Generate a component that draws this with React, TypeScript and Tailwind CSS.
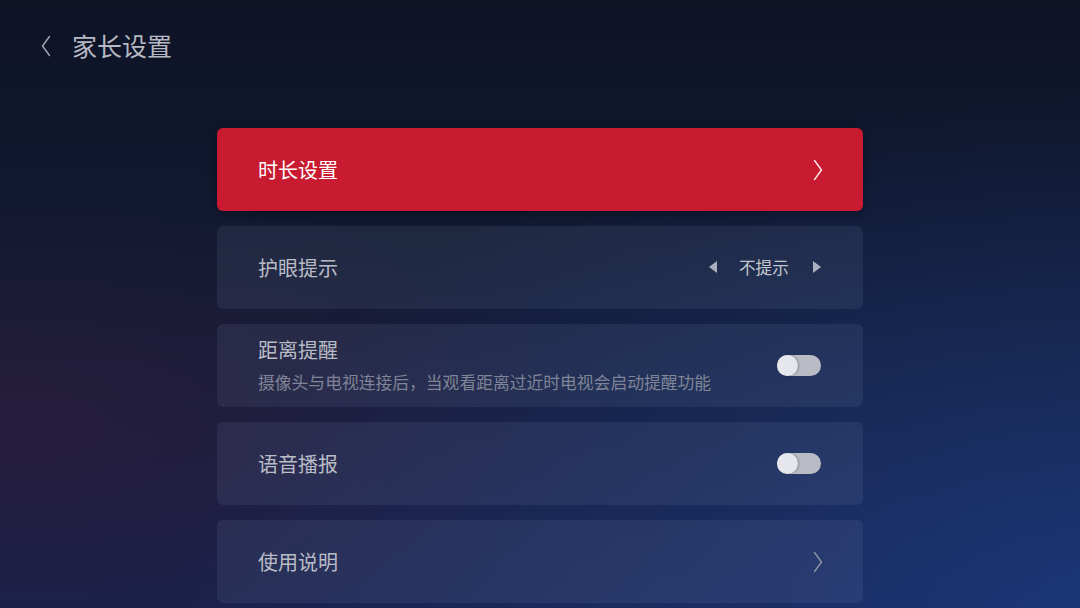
const font = "font-['Noto_Sans_CJK_SC','Noto_Sans',sans-serif]";

function Chevron({ dir = "right", className }: { dir?: "left" | "right"; className?: string }) {
    return (
        <svg viewBox="0 0 10 22" className={className} fill="none" stroke="currentColor" strokeWidth={1.4} strokeLinecap="round" strokeLinejoin="round">
            {dir === "right" ? <path d="M1.5 1.5 L8.5 11 L1.5 20.5" /> : <path d="M8.5 1.5 L1.5 11 L8.5 20.5" />}
        </svg>
    );
}

function Toggle() {
    return (
        <div className="relative w-[44px] h-[21px] rounded-full bg-[#b9bbc5]">
            <div className="absolute left-0 top-0 size-[21px] rounded-full bg-[#e6e7ec] shadow-[1px_0_2px_rgba(0,0,0,0.25)]"></div>
        </div>
    );
}

function Row({ children, active = false }: { children: React.ReactNode; active?: boolean }) {
    return (
        <div
            className={
                "h-[83px] rounded-[6px] pl-[41px] pr-[42px] flex items-center justify-between " +
                (active
                    ? "bg-[#c81a30] text-white shadow-[0_3px_10px_rgba(0,0,0,0.3)]"
                    : "bg-[rgba(150,165,200,0.11)] text-[#b9bcc6]")
            }
        >
            {children}
        </div>
    );
}

export default function App() {
    return (
        <div
            className={
                font +
                " w-[1080px] h-[608px] overflow-hidden bg-[radial-gradient(ellipse_at_0%_70%,rgba(80,28,60,0.3),transparent_40%),radial-gradient(ellipse_at_105%_100%,rgba(30,70,150,0.6),transparent_60%),linear-gradient(180deg,#0e1326_0%,#121a33_45%,#19214a_100%)]"
            }
        >
            <div className="flex items-center h-[94px] pl-[41px] pb-[2px]">
                <Chevron dir="left" className="w-[10px] h-[22px] text-[#a4a8b4]" />
                <span className="ml-[21px] text-[25px] text-[#b6b9c4]">家长设置</span>
            </div>
            <div className="w-[646px] ml-[217px] mt-[34px] flex flex-col gap-[15px]">
                <Row active>
                    <span className="text-[20px]">时长设置</span>
                    <Chevron className="w-[10px] h-[22px] text-white/90 mr-[-2px]" />
                </Row>
                <Row>
                    <span className="text-[20px]">护眼提示</span>
                    <div className="flex items-center gap-[18px] text-[16.7px] text-[#c3c6ce]">
                        <span className="w-0 h-0 border-y-[6px] border-y-transparent border-r-[8px] border-r-[#aab0bf] mr-[4px]"></span>
                        <span>不提示</span>
                        <span className="w-0 h-0 border-y-[6px] border-y-transparent border-l-[8px] border-l-[#aab0bf] ml-[6px]"></span>
                    </div>
                </Row>
                <Row>
                    <div className="flex flex-col mt-[-2px]">
                        <span className="text-[20px] leading-[28px]">距离提醒</span>
                        <span className="text-[16.8px] leading-[24px] mt-[6px] text-[#7f8496]">
                            摄像头与电视连接后，当观看距离过近时电视会启动提醒功能
                        </span>
                    </div>
                    <Toggle />
                </Row>
                <Row>
                    <span className="text-[20px]">语音播报</span>
                    <Toggle />
                </Row>
                <Row>
                    <span className="text-[20px]">使用说明</span>
                    <Chevron className="w-[10px] h-[22px] text-[#8e93a3] mr-[-2px]" />
                </Row>
            </div>
        </div>
    );
}
